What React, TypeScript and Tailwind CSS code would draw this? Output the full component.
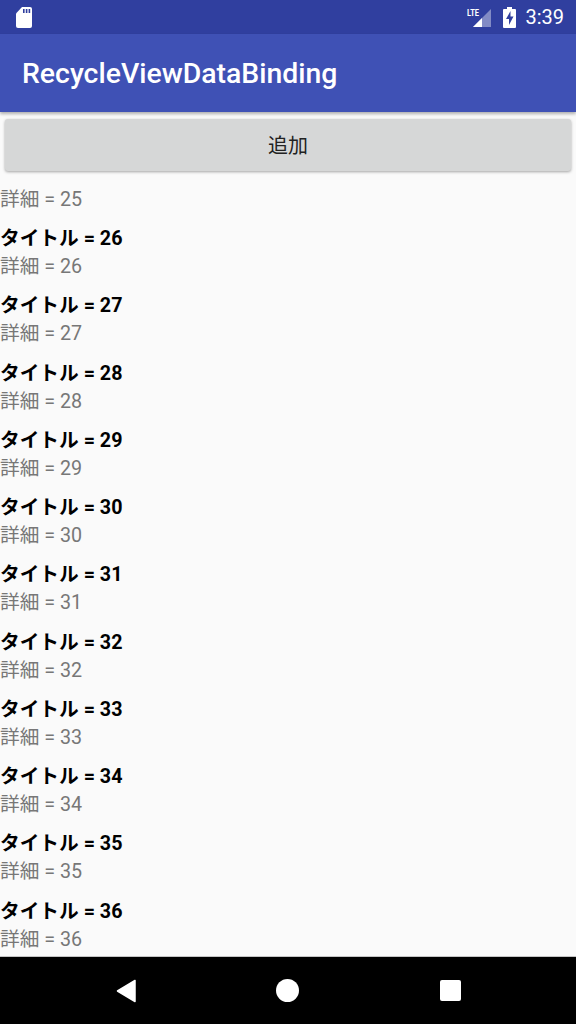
import React from "react";

const rows = [26, 27, 28, 29, 30, 31, 32, 33, 34, 35, 36];
const jp = "font-['Roboto','Noto_Sans_CJK_JP',sans-serif]";

function StatusBar() {
  return (
    <div className="flex h-[34px] shrink-0 items-center justify-between bg-[#303f9f] pl-[16px] pr-[12px]">
      <svg width="16" height="21" viewBox="0 0 16 21">
        <path
          d="M6 0H14a2 2 0 0 1 2 2V19a2 2 0 0 1-2 2H2a2 2 0 0 1-2-2V6.5Z"
          fill="#fff"
        />
        <path d="M7 2h1.6v4H7zM9.8 2h1.6v4H9.8zM12.6 2h1.6v4h-1.6z" fill="#303f9f" />
      </svg>
      <div className="flex items-center">
        <svg width="24" height="20" viewBox="0 0 24 20" className="mr-[12px]">
          <path d="M24 2V20H6Z" fill="#fff" fillOpacity="0.4" />
          <path d="M15 11V20H6Z" fill="#fff" />
          <text x="0" y="9" fontSize="9.5" fontWeight="700" fill="#fff" fontFamily="Roboto" textLength="12" lengthAdjust="spacingAndGlyphs">
            LTE
          </text>
        </svg>
        <svg width="13" height="21" viewBox="0 0 13 21" className="mr-[9px]">
          <path
            d="M4 0H9V2H12a1 1 0 0 1 1 1V20a1 1 0 0 1-1 1H1a1 1 0 0 1-1-1V3a1 1 0 0 1 1-1H4Z"
            fill="#fff"
          />
          <path d="M7.5 4 3 12H6V18L10.5 9.5H7.5Z" fill="#303f9f" />
        </svg>
        <span className="font-['Roboto',sans-serif] text-[20px] leading-none text-white">3:39</span>
      </div>
    </div>
  );
}

export default function App() {
  return (
    <div className={`flex h-[1024px] w-[576px] flex-col overflow-hidden bg-[#fafafa] ${jp}`}>
      <StatusBar />
      <div className="relative z-10 flex h-[78px] shrink-0 items-center bg-[#3f51b5] pl-[22px] shadow-[0_2px_3px_rgba(0,0,0,0.3)]">
        <span className="pt-[2px] text-[28.4px] font-medium text-white">RecycleViewDataBinding</span>
      </div>
      <div className="flex min-h-0 flex-1 flex-col border-b border-[#c4c4c4]">
        <div className="relative z-10 px-[5px] pt-[7px]">
          <button className="h-[52px] w-full rounded-[3px] bg-[#d6d7d7] pt-[2px] text-[20px] text-[#222] shadow-[0_1px_3px_rgba(0,0,0,0.35)]">
            追加
          </button>
        </div>
        <div className="min-h-0 flex-1 overflow-hidden">
          <div className="h-[42px] pt-[15px] text-[19.7px] leading-[27px] text-[#777]">詳細 = 25</div>
          {rows.map((n) => (
            <div key={n} className="h-[67.25px] pt-[12px]">
              <div className="text-[19.7px] leading-[28px] font-bold text-black">タイトル = {n}</div>
              <div className="text-[19.7px] leading-[27px] text-[#777]">詳細 = {n}</div>
            </div>
          ))}
        </div>
      </div>
      <div className="flex h-[67px] shrink-0 items-center justify-center bg-black">
        <div className="flex w-[345px] items-center justify-between">
          <svg width="20" height="24" viewBox="0 0 20 24">
            <path d="M19 1.5V22.5L1.5 12Z" fill="#fff" stroke="#fff" strokeWidth="1.5" strokeLinejoin="round" />
          </svg>
          <div className="h-[23px] w-[23px] rounded-full bg-white" />
          <div className="h-[21px] w-[21px] rounded-[2px] bg-white" />
        </div>
      </div>
    </div>
  );
}
